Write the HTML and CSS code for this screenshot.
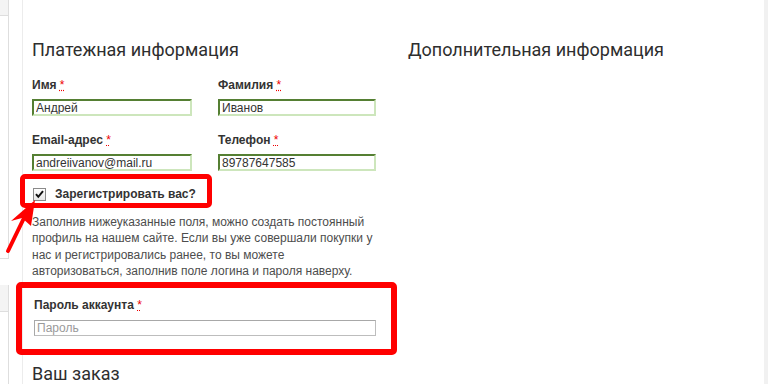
FILE: index.html
```html
<!DOCTYPE html>
<html lang="ru">
<head>
<meta charset="utf-8">
<title>Оформление заказа</title>
<link rel="stylesheet" href="styles.css">
</head>
<body>
<div class="page">
  <aside class="rail">
    <div class="rail-tabs">
      <div class="tab-top"></div>
      <div class="tab-box"></div>
      <div class="tab-gap"></div>
      <div class="tab-head"></div>
      <div class="tab-rest"></div>
    </div>
  </aside>
  <main class="content">
    <section class="col billing">
      <h2 class="title">Платежная информация</h2>
      <div class="fields">
        <div class="field">
          <label class="label">Имя <abbr class="req" title="обязательно">*</abbr></label>
          <input class="input ok" type="text" value="Андрей">
        </div>
        <div class="field">
          <label class="label">Фамилия <abbr class="req" title="обязательно">*</abbr></label>
          <input class="input ok" type="text" value="Иванов">
        </div>
        <div class="field">
          <label class="label">Email-адрес <abbr class="req" title="обязательно">*</abbr></label>
          <input class="input ok" type="text" value="andreiivanov@mail.ru">
        </div>
        <div class="field">
          <label class="label">Телефон <abbr class="req" title="обязательно">*</abbr></label>
          <input class="input ok" type="text" value="89787647585">
        </div>
      </div>
      <div class="register">
        <span class="cb"><svg viewBox="0 0 13 13" width="13" height="13"><path d="M3 6.2 L5.3 8.8 L10 3.2" fill="none" stroke="#111" stroke-width="2"/></svg></span>
        <span class="register-text">Зарегистрировать вас?</span>
      </div>
      <p class="note">Заполнив нижеуказанные поля, можно создать постоянный<br>профиль на нашем сайте. Если вы уже совершали покупки у<br>нас и регистрировались ранее, то вы можете<br>авторизоваться, заполнив поле логина и пароля наверху.</p>
      <div class="account">
        <label class="label">Пароль аккаунта <abbr class="req" title="обязательно">*</abbr></label>
        <input class="input plain" type="password" placeholder="Пароль">
      </div>
      <h2 class="title order">Ваш заказ</h2>
    </section>
    <section class="col extra">
      <h2 class="title">Дополнительная информация</h2>
    </section>
  </main>
  <div class="scroll"></div>

  <div class="mark mark-reg"></div>
  <div class="mark mark-pass"></div>
  <svg class="arrow" viewBox="0 0 40 70" width="40" height="70">
    <line x1="8" y1="61" x2="24" y2="28" stroke="#f00" stroke-width="4" stroke-linecap="round"/>
    <polygon points="35,10 11,31 22,28 31,36" fill="#f00"/>
  </svg>
</div>
</body>
</html>
```
FILE: styles.css
```css
* { box-sizing: border-box; }
html, body { margin: 0; padding: 0; background: #fff; }
body { width: 768px; height: 384px; overflow: hidden; font-family: "Liberation Sans", Arial, sans-serif; }

.page { position: relative; display: flex; width: 768px; height: 384px; }

.rail { width: 23px; border-right: 1px solid #ececec; flex: none; }
.rail-tabs { width: 9px; height: 100%; display: flex; flex-direction: column; }
.tab-top { height: 16px; background: #f4f4f4; border-bottom: 1px solid #dedede; border-right: 1px solid #dedede; }
.tab-box { height: 243px; border-right: 1px solid #dedede; border-bottom: 1px solid #dedede; }
.tab-gap { height: 26px; }
.tab-head { height: 27px; background: #f4f4f4; border-bottom: 1px solid #dedede; border-right: 1px solid #dedede; }
.tab-rest { flex: 1; border-right: 1px solid #dedede; }

.content { flex: 1; display: flex; gap: 32px; padding: 38px 0 0 9px; }
.col.billing { width: 344px; flex: none; }
.col.extra { flex: 1; }

.title { margin: 0; font-family: Roboto, "Noto Sans", sans-serif; font-weight: 400; font-size: 18px; line-height: 24px; color: #2e2e2e; }

.fields { margin-top: 15px; display: grid; grid-template-columns: 160px 158px; column-gap: 26px; row-gap: 16px; }
.field { display: flex; flex-direction: column; }
.label { display: block; font-size: 12px; line-height: 16px; font-weight: bold; color: #333; margin-bottom: 6px; }
.req { color: #e00; font-weight: normal; text-decoration: underline dotted #e00; cursor: help; }

.input { display: block; width: 100%; height: 17px; margin: 0; padding: 0 2px; font-family: "Liberation Sans", Arial, sans-serif; font-size: 12px; color: #333; background: #fff; outline: none; }
.input.ok { border-style: solid; border-width: 2px; border-color: #557f33 #cde6bc #cde6bc #557f33; }
.input.plain { height: 16px; border: 1px solid #bdbdbd; border-top-color: #a8a8a8; border-left-color: #a8a8a8; }
.input.plain::placeholder { color: #9a9a9a; }

.register { margin-top: 15px; height: 16px; display: flex; align-items: center; gap: 9px; padding-left: 1px; }
.cb { width: 13px; height: 13px; border: 1px solid #8a8a8a; background: linear-gradient(#fff, #e6e6e6); display: flex; }
.cb svg { display: block; margin: -1px; }
.register-text { font-size: 12px; line-height: 16px; font-weight: bold; color: #333; }

.note { margin: 11.5px 0 0; font-size: 12px; line-height: 16.5px; color: #4d4d4d; width: 352px; }

.account { margin-top: 17.5px; padding-left: 2px; }
.account .label { margin-bottom: 7px; }

.order { margin-top: 25.5px; }

.scroll { width: 4px; flex: none; background: #f1f1f1; }

.mark { position: absolute; border-style: solid; border-color: #f00; border-radius: 5px; pointer-events: none; }
.mark-reg { left: 20px; top: 174px; width: 192px; height: 34px; border-width: 5px; }
.mark-pass { left: 16px; top: 282px; width: 381px; height: 73px; border-width: 6px; }

.arrow { position: absolute; left: 0; top: 190px; }
```
